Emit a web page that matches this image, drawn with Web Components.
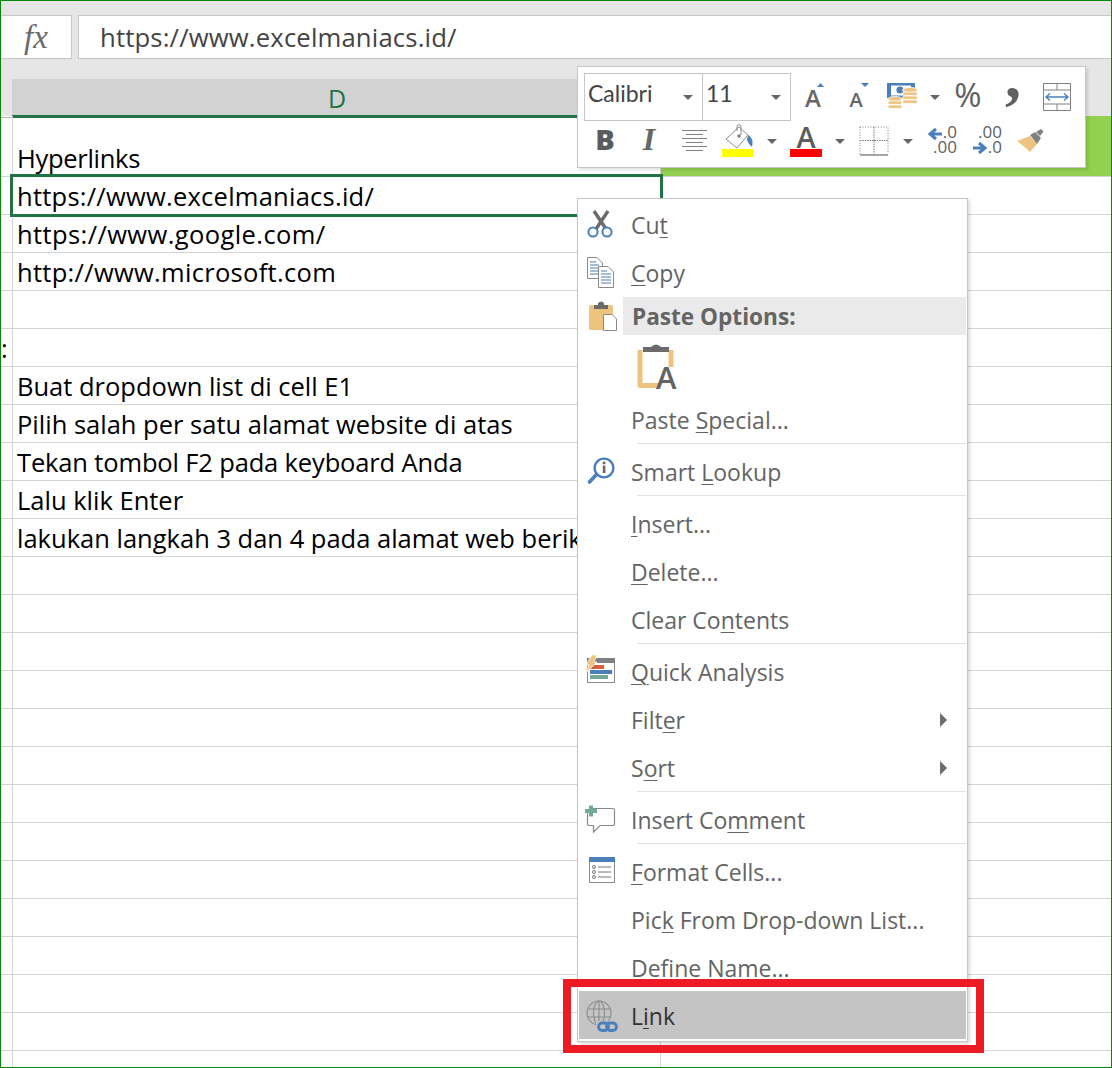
<!DOCTYPE html>
<html>
<head>
<meta charset="utf-8">
<title>Excel context menu</title>
<style>
  html, body { margin: 0; padding: 0; background: #fff; }
</style>
</head>
<body>
<xl-window>
  <xl-formula-bar>https://www.excelmaniacs.id/</xl-formula-bar>
  <xl-col-header>D</xl-col-header>
  <xl-sheet id="sheet">
    <xl-row tall fill style="letter-spacing:-.3px">Hyperlinks</xl-row>
    <xl-row selected style="letter-spacing:.25px">https://www.excelmaniacs.id/</xl-row>
    <xl-row style="letter-spacing:.4px">https://www.google.com/</xl-row>
    <xl-row style="letter-spacing:.3px">http://www.microsoft.com</xl-row>
    <xl-row></xl-row>
    <xl-row><span slot="gutter">:</span></xl-row>
    <xl-row>Buat dropdown list di cell E1</xl-row>
    <xl-row>Pilih salah per satu alamat website di atas</xl-row>
    <xl-row style="letter-spacing:-.15px">Tekan tombol F2 pada keyboard Anda</xl-row>
    <xl-row>Lalu klik Enter</xl-row>
    <xl-row>lakukan langkah 3 dan 4 pada alamat web berikut</xl-row>
  </xl-sheet>

  <xl-mini-toolbar slot="overlay"></xl-mini-toolbar>

  <xl-context-menu slot="overlay">
    <xl-menu-item icon="cut">Cu<u>t</u></xl-menu-item>
    <xl-menu-item icon="copy"><u>C</u>opy</xl-menu-item>
    <xl-menu-heading icon="paste">Paste Options:</xl-menu-heading>
    <xl-paste-row></xl-paste-row>
    <xl-menu-item>Paste <u>S</u>pecial...</xl-menu-item>
    <xl-menu-sep></xl-menu-sep>
    <xl-menu-item icon="lookup">Smart <u>L</u>ookup</xl-menu-item>
    <xl-menu-sep></xl-menu-sep>
    <xl-menu-item><u>I</u>nsert...</xl-menu-item>
    <xl-menu-item><u>D</u>elete...</xl-menu-item>
    <xl-menu-item>Clear Co<u>n</u>tents</xl-menu-item>
    <xl-menu-sep></xl-menu-sep>
    <xl-menu-item icon="quick"><u>Q</u>uick Analysis</xl-menu-item>
    <xl-menu-item arrow>Filt<u>e</u>r</xl-menu-item>
    <xl-menu-item arrow>S<u>o</u>rt</xl-menu-item>
    <xl-menu-sep></xl-menu-sep>
    <xl-menu-item icon="comment">Insert Co<u>m</u>ment</xl-menu-item>
    <xl-menu-sep></xl-menu-sep>
    <xl-menu-item icon="format"><u>F</u>ormat Cells...</xl-menu-item>
    <xl-menu-item>Pic<u>k</u> From Drop-down List...</xl-menu-item>
    <xl-menu-item>Define N<u>a</u>me...</xl-menu-item>
    <xl-menu-item icon="link" active>L<u>i</u>nk</xl-menu-item>
  </xl-context-menu>

  <xl-highlight slot="overlay"></xl-highlight>
</xl-window>

<script>
const GREY = "#6b6b6b";
const BLUE = "#4a7fbc";
const TAN = "#edc47f";
const UI_FONT = "'Open Sans', 'Noto Sans', sans-serif";

// the two stacked lines of the decimal buttons are one text
const decimals = (text) => `
  <foreignObject x="0" y="3" width="31" height="36">
    <div xmlns="http://www.w3.org/1999/xhtml" style="white-space:pre;text-align:right;font:17px/15px 'Open Sans',sans-serif;color:#606060">${text}</div>
  </foreignObject>`;

// Every icon: width, height, svg body. Toolbar icons use the row top as y=0.
const ICONS = {
  cut: [32, 32, `
    <path d="M9 1 L21 19" stroke="${GREY}" stroke-width="3.4"/>
    <path d="M23 1 L11 19" stroke="${GREY}" stroke-width="3.4"/>
    <circle cx="8" cy="22" r="4.6" fill="#fff" stroke="${BLUE}" stroke-width="2"/>
    <circle cx="22" cy="22" r="4.6" fill="#fff" stroke="${BLUE}" stroke-width="2"/>`],
  copy: [32, 32, `
    <path d="M2.5 -.5 H12 L17.5 5 V20.5 H2.5 Z" fill="#fff" stroke="#8a8a8a"/>
    <path d="M5 4 H11 M5 7 H14 M5 10 H14 M5 13 H14 M5 16 H14" stroke="${BLUE}"/>
    <path d="M13.5 8.5 H23 L28.5 14 V29.5 H13.5 Z" fill="#fff" stroke="#8a8a8a"/>
    <path d="M16 13 H22 M16 16 H26 M16 19 H26 M16 22 H26 M16 25 H26" stroke="${BLUE}"/>`],
  paste: [32, 34, `
    <rect x="4" y="6" width="24" height="25" rx="1.5" fill="${TAN}"/>
    <path d="M9 10 V6 H13 V4 Q16 1 19 4 V6 H23 V10 Z" fill="${GREY}"/>
    <path d="M18.5 15.5 H27 L31.5 20 V31.5 H18.5 Z" fill="#fff" stroke="#8a8a8a"/>`],
  pasteText: [42, 46, `
    <path d="M3 6 V41.5 H21 M34 6 V23" fill="none" stroke="${TAN}" stroke-width="5" stroke-linejoin="round"/>
    <path d="M6 8 V3 H14 Q19 -2 24 3 H32 V8 Z" fill="${GREY}"/>
    <text x="19" y="45" font-family="'Open Sans', sans-serif" font-weight="600" font-size="31" fill="#636363">A</text>`],
  lookup: [32, 32, `
    <circle cx="19" cy="11" r="9.4" fill="#fff" stroke="${BLUE}" stroke-width="2.4"/>
    <path d="M11.5 17.5 L4.5 25" stroke="${BLUE}" stroke-width="3.6" stroke-linecap="round"/>
    <rect x="17.8" y="4.6" width="2.6" height="2.6" fill="#666"/>
    <rect x="17.8" y="8.6" width="2.6" height="7.4" fill="#666"/>`],
  quick: [32, 32, `
    <rect x="2.5" y="1.5" width="27" height="24" fill="#fff" stroke="#8a8a8a"/>
    <rect x="2" y="1" width="28" height="5" fill="#808080"/>
    <rect x="5" y="8" width="14" height="4" fill="#d9603f"/>
    <rect x="5" y="13" width="22" height="4" fill="${BLUE}"/>
    <rect x="5" y="18" width="18" height="4" fill="#72a895"/>
    <path d="M7 -2 H12 L9 5 H12 L0 17 L4 8 H1 Z" fill="${TAN}" stroke="#fff" stroke-width=".8"/>`],
  comment: [32, 32, `
    <path d="M5 3.5 H28 Q29.5 3.5 29.5 5 V19 Q29.5 20.5 28 20.5 H15 L8.5 27 V20.5 H4 Q2.5 20.5 2.5 19 V7" fill="#fff" stroke="#8a8a8a" stroke-width="1.2"/>
    <path d="M0 6 H12 M6 .5 V11.5" stroke="#72a895" stroke-width="4"/>`],
  format: [32, 32, `
    <rect x="4.5" y=".5" width="25" height="25" fill="#fff" stroke="#8a8a8a"/>
    <rect x="4" y="0" width="26" height="5" fill="${BLUE}"/>
    <circle cx="9" cy="10" r="1.5" fill="none" stroke="#777"/>
    <circle cx="9" cy="15" r="1.5" fill="none" stroke="#777"/>
    <circle cx="9" cy="20" r="1.5" fill="none" stroke="#777"/>
    <path d="M13 10 H26 M13 15 H26 M13 20 H26" stroke="#777"/>`],
  link: [34, 34, `
    <g fill="none" stroke="#8c8c8c" stroke-width="1.1">
      <circle cx="14" cy="14" r="12"/>
      <ellipse cx="14" cy="14" rx="5.5" ry="12"/>
      <path d="M14 2 V26 M2.5 10 H25.5 M2.5 18 H25.5"/>
    </g>
    <rect x="11" y="22" width="23" height="11" fill="#c4c4c4"/>
    <g fill="none" stroke="${BLUE}" stroke-width="2.8">
      <rect x="13.5" y="24" width="10" height="7.5" rx="3.7"/>
      <rect x="21.5" y="24" width="10" height="7.5" rx="3.7"/>
    </g>`],
  growFont: [26, 48, `
    <text x="12" y="34" text-anchor="middle" font-family="'Open Sans', sans-serif" font-weight="600" font-size="24" fill="#666">A</text>
    <path d="M16 14 L19.5 10 L23 14 Z" fill="${BLUE}"/>`],
  shrinkFont: [26, 48, `
    <text x="12" y="34" text-anchor="middle" font-family="'Open Sans', sans-serif" font-weight="600" font-size="20" fill="#666">A</text>
    <path d="M17 10 H25 L21 14 Z" fill="${BLUE}"/>`],
  currency: [34, 48, `
    <path d="M1 10 H29 V25 H1 Z" fill="${BLUE}"/>
    <path d="M5 12.5 H25 V22.5 H5 Z" fill="#fff"/>
    <circle cx="14" cy="17" r="3.6" fill="${BLUE}"/>
    <g fill="${TAN}" stroke="#fff" stroke-width=".8">
      <ellipse cx="24" cy="17" rx="7.5" ry="2.6"/>
      <rect x="16.5" y="19" width="15" height="3.4" rx="1.6"/>
      <rect x="16.5" y="23" width="15" height="3.4" rx="1.6"/>
      <rect x="16.5" y="27" width="15" height="3.4" rx="1.6"/>
      <ellipse cx="9" cy="26" rx="7" ry="2.6"/>
      <rect x="2" y="28" width="14" height="3.4" rx="1.6"/>
      <rect x="2" y="32" width="14" height="3.4" rx="1.6"/>
    </g>`],
  percent: [34, 48, `
    <text x="17" y="34" text-anchor="middle" font-family="'Open Sans', sans-serif" font-size="33" fill="#606060">%</text>`],
  comma: [24, 48, `
    <text x="12" y="24" text-anchor="middle" font-family="'Liberation Serif', serif" font-weight="700" font-size="64" fill="#606060">,</text>`],
  wrapWidth: [30, 48, `
    <path d="M1.5 10.5 H28.5 V37.5 H1.5 Z M1.5 17 H28.5 M1.5 31 H28.5 M15 10.5 V17 M15 31 V37.5" fill="none" stroke="#808080"/>
    <path d="M4 24 H26 M8 20.5 L4 24 L8 27.5 M22 20.5 L26 24 L22 27.5" fill="none" stroke="${BLUE}" stroke-width="1.4"/>`],
  bold: [30, 40, `
    <text x="15" y="29" text-anchor="middle" font-family="'Open Sans', sans-serif" font-weight="800" font-size="29" fill="#5c5c5c">B</text>`],
  italic: [30, 40, `
    <text x="15" y="29" text-anchor="middle" font-family="'Liberation Serif', serif" font-style="italic" font-weight="700" font-size="32" fill="#666">I</text>`],
  align: [28, 40, `
    <path d="M2 9.5 H27 M6 13.5 H23 M2 17.5 H27 M6 21.5 H23 M2 25.5 H27 M6 29.5 H23" stroke="#808080"/>`],
  fill: [34, 40, `
    <path d="M18 6 L5 18 L16 27 L27 14 Z" fill="#fff" stroke="#8a8a8a"/>
    <path d="M16 10 V5 Q18 2 20 5 V14" fill="none" stroke="#8a8a8a"/>
    <circle cx="18" cy="15" r="1.8" fill="#808080"/>
    <path d="M27 14 Q33 17 31 26 Q28 24 26 19 Z" fill="${BLUE}"/>
    <rect x="1" y="28" width="32" height="8" fill="#ffff00"/>`],
  fontColor: [34, 40, `
    <text x="17" y="27" text-anchor="middle" font-family="'Open Sans', sans-serif" font-weight="600" font-size="29" fill="#5c5c5c">A</text>
    <rect x="1" y="28" width="32" height="8" fill="#ff0000"/>`],
  borders: [32, 40, `
    <path d="M2 6 H30 V33 M2 6 V33" fill="none" stroke="#808080" stroke-dasharray="1 1.6"/>
    <path d="M16 6 V33 M2 19.5 H30" fill="none" stroke="#707070" stroke-dasharray="1.4 1"/>
    <path d="M2 34 H30" stroke="#808080" stroke-width="1.4"/>`],
  decLeft: [32, 40, `
    ${decimals(".0\n.00")}
    <path d="M16 13 H5 M10 8 L4 13 L10 18" fill="none" stroke="${BLUE}" stroke-width="3"/>`],
  decRight: [32, 40, `
    ${decimals(".00\n.0")}
    <path d="M2 27 H13 M8 22 L14 27 L8 32" fill="none" stroke="${BLUE}" stroke-width="3"/>`],
  brush: [30, 40, `
    <path d="M2 20 L15 15 L22 23 L15 31 Q9 25 2 20 Z" fill="${TAN}"/>
    <path d="M15 14 L20 11 L26 17 L22 23 Z" fill="#808080"/>
    <path d="M21 11 L26 8 L28.5 10.5 L25 15 Z" fill="#808080"/>`]
};

class XlIcon extends HTMLElement {
  constructor() {
    super();
    this.attachShadow({ mode: "open" });
  }
  connectedCallback() {
    const [w, h, body] = ICONS[this.getAttribute("name")];
    this.shadowRoot.innerHTML = `
      <style>
        :host { display: block; flex: none; }
        svg { display: block; overflow: visible; }
      </style>
      <svg width="${w}" height="${h}" viewBox="0 0 ${w} ${h}">${body}</svg>
    `;
  }
}
customElements.define("xl-icon", XlIcon);

class XlWindow extends HTMLElement {
  constructor() {
    super();
    this.attachShadow({ mode: "open" }).innerHTML = `
      <style>
        :host {
          display: block;
          position: relative;
          box-sizing: border-box;
          width: 1112px;
          height: 1068px;
          border: 1px solid #0a860a;
          overflow: hidden;
          background: #fff;
          font-family: ${UI_FONT};
        }
      </style>
      <slot></slot>
      <slot name="overlay"></slot>
    `;
  }
}
customElements.define("xl-window", XlWindow);

class XlFormulaBar extends HTMLElement {
  constructor() {
    super();
    this.attachShadow({ mode: "open" }).innerHTML = `
      <style>
        :host {
          display: flex;
          box-sizing: border-box;
          height: 78px;
          padding-top: 14px;
          gap: 6px;
          background: #e6e6e6;
        }
        .fx, .input {
          box-sizing: border-box;
          height: 44px;
          background: #fff;
          border: 1px solid #c6c6c6;
          display: flex;
          align-items: center;
        }
        .fx {
          width: 71px;
          border-left: 0;
          justify-content: center;
          font: italic 33px "Liberation Serif", serif;
          color: #6a6a6a;
        }
        .input {
          flex: 1;
          border-right: 0;
          padding-left: 21px;
          font-size: 25.7px;
          letter-spacing: .14px;
          color: #444;
        }
      </style>
      <div class="fx">fx</div>
      <div class="input"><slot></slot></div>
    `;
  }
}
customElements.define("xl-formula-bar", XlFormulaBar);

class XlColHeader extends HTMLElement {
  constructor() {
    super();
    this.attachShadow({ mode: "open" }).innerHTML = `
      <style>
        :host {
          display: grid;
          grid-template-columns: 11px 648px 1fr;
          height: 37px;
          background: #e6e6e6;
        }
        .gutter, .rest { border-bottom: 1px solid #b5b5b5; }
        .d {
          box-sizing: border-box;
          background: #d2d2d2;
          border-bottom: 3px solid #217346;
          display: flex;
          align-items: center;
          justify-content: center;
          padding: 2px 0 0 2px;
          font-size: 25px;
          color: #217346;
        }
      </style>
      <div class="gutter"></div>
      <div class="d"><slot></slot></div>
      <div class="rest"></div>
    `;
  }
}
customElements.define("xl-col-header", XlColHeader);

class XlSheet extends HTMLElement {
  constructor() {
    super();
    this.attachShadow({ mode: "open" }).innerHTML = `
      <style>
        :host { display: block; font-size: 25.5px; color: #000; }
      </style>
      <slot></slot>
    `;
  }
  connectedCallback() {
    // blank rows down to the bottom of the window
    while (this.children.length < 26) {
      this.appendChild(document.createElement("xl-row"));
    }
  }
}
customElements.define("xl-sheet", XlSheet);

class XlRow extends HTMLElement {
  constructor() {
    super();
    this.attachShadow({ mode: "open" }).innerHTML = `
      <style>
        :host {
          display: grid;
          grid-template-columns: 12px 648px 1fr;
          box-sizing: border-box;
          height: 38px;
          border-bottom: 1px solid #d4d4d4;
          line-height: 35px;
        }
        :host([tall]) { height: 61px; }
        .gutter {
          border-right: 1px solid #d4d4d4;
          white-space: nowrap;
          overflow: hidden;
          align-self: stretch;
          display: flex;
          align-items: flex-end;
        }
        .d {
          position: relative;
          box-sizing: border-box;
          border-right: 1px solid #d4d4d4;
          padding-left: 4px;
          white-space: nowrap;
          display: flex;
          align-items: flex-end;
        }
        :host([fill]) .e { background: #92d050; }
        :host([selected]) .d::after {
          content: "";
          position: absolute;
          left: -3px;
          top: -3px;
          right: -3px;
          bottom: -3px;
          border: 3px solid #217346;
        }
      </style>
      <div class="gutter"><slot name="gutter"></slot></div>
      <div class="d"><span><slot></slot></span></div>
      <div class="e"></div>
    `;
  }
}
customElements.define("xl-row", XlRow);

class XlMiniToolbar extends HTMLElement {
  constructor() {
    super();
    const ic = (name, ml) => `<xl-icon name="${name}" style="margin-left:${ml}px"></xl-icon>`;
    const arrow = (ml) => `<span class="arrow" style="margin-left:${ml}px"></span>`;
    this.attachShadow({ mode: "open" }).innerHTML = `
      <style>
        :host {
          position: absolute;
          left: 576px;
          top: 65px;
          box-sizing: border-box;
          width: 509px;
          height: 102px;
          padding: 6px 0 0 6px;
          background: #fff;
          border: 1px solid #c6c6c6;
          box-shadow: 2px 2px 3px rgba(0, 0, 0, .12);
          color: #444;
        }
        .row { display: flex; align-items: center; }
        .top { height: 48px; }
        .bottom { height: 40px; }
        .combo {
          box-sizing: border-box;
          height: 48px;
          border: 1px solid #c6c6c6;
          display: flex;
          align-items: center;
          padding: 0 9px 0 3px;
          font: 23px Lato, sans-serif;
          color: #444;
        }
        .combo span { flex: 1; position: relative; top: -4px; }
        .combo.font { width: 119px; }
        .combo.size { width: 89px; margin-left: -1px; }
        .arrow {
          flex: none;
          width: 0;
          height: 0;
          border-left: 5px solid transparent;
          border-right: 5px solid transparent;
          border-top: 5px solid #666;
        }
      </style>
      <div class="row top">
        <div class="combo font"><span>Calibri</span><i class="arrow"></i></div>
        <div class="combo size"><span>11</span><i class="arrow"></i></div>
        ${ic("growFont", 10)}${ic("shrinkFont", 17)}${ic("currency", 16)}${arrow(10)}
        ${ic("percent", 11)}${ic("comma", 16)}${ic("wrapWidth", 17)}
      </div>
      <div class="row bottom">
        ${ic("bold", 6)}${ic("italic", 14)}${ic("align", 16)}${ic("fill", 13)}${arrow(12)}
        ${ic("fontColor", 12)}${arrow(12)}${ic("borders", 13)}${arrow(13)}
        ${ic("decLeft", 13)}${ic("decRight", 13)}${ic("brush", 12)}
      </div>
    `;
  }
}
customElements.define("xl-mini-toolbar", XlMiniToolbar);

class XlContextMenu extends HTMLElement {
  constructor() {
    super();
    this.attachShadow({ mode: "open" }).innerHTML = `
      <style>
        :host {
          position: absolute;
          left: 576px;
          top: 197px;
          box-sizing: border-box;
          width: 391px;
          padding: 3px 1px 2px;
          background: #fff;
          border: 1px solid #c6c6c6;
          box-shadow: 2px 2px 3px rgba(0, 0, 0, .15);
          font-size: 23px;
          color: #646464;
        }
      </style>
      <slot></slot>
    `;
  }
}
customElements.define("xl-context-menu", XlContextMenu);

class XlMenuItem extends HTMLElement {
  constructor() {
    super();
    this.attachShadow({ mode: "open" });
  }
  connectedCallback() {
    const icon = this.getAttribute("icon");
    this.shadowRoot.innerHTML = `
      <style>
        :host {
          display: flex;
          align-items: center;
          box-sizing: border-box;
          height: 48px;
          white-space: nowrap;
        }
        :host([active]) {
          margin-top: -2px;
          padding-top: 4px;
          background: #c4c4c4;
          color: #333;
        }
        .icon {
          flex: none;
          width: 52px;
          height: 32px;
          padding-left: 6px;
          box-sizing: border-box;
        }
        :host([active]) .icon { position: relative; top: -2px; }
        .label { flex: 1; padding-bottom: 2px; }
        ::slotted(u) { text-underline-offset: 3px; text-decoration-thickness: 1px; }
        .arrow {
          width: 0;
          height: 0;
          margin-right: 19px;
          border-top: 7px solid transparent;
          border-bottom: 7px solid transparent;
          border-left: 7px solid #6b6b6b;
          position: relative;
          top: -1px;
        }
      </style>
      <div class="icon">${icon ? `<xl-icon name="${icon}"></xl-icon>` : ""}</div>
      <div class="label"><slot></slot></div>
      ${this.hasAttribute("arrow") ? `<div class="arrow"></div>` : ""}
    `;
  }
}
customElements.define("xl-menu-item", XlMenuItem);

class XlMenuHeading extends HTMLElement {
  constructor() {
    super();
    this.attachShadow({ mode: "open" });
  }
  connectedCallback() {
    this.shadowRoot.innerHTML = `
      <style>
        :host {
          display: flex;
          align-items: center;
          box-sizing: border-box;
          height: 38px;
          margin-top: -1px;
        }
        .icon { flex: none; width: 44px; padding-left: 6px; box-sizing: border-box; }
        .title {
          flex: 1;
          align-self: stretch;
          display: flex;
          align-items: center;
          padding-left: 9px;
          background: #eaeaea;
          font-weight: 700;
          font-size: 22.6px;
        }
      </style>
      <div class="icon"><xl-icon name="${this.getAttribute("icon")}"></xl-icon></div>
      <div class="title"><slot></slot></div>
    `;
  }
}
customElements.define("xl-menu-heading", XlMenuHeading);

class XlPasteRow extends HTMLElement {
  constructor() {
    super();
    this.attachShadow({ mode: "open" }).innerHTML = `
      <style>
        :host {
          display: block;
          box-sizing: border-box;
          height: 62px;
          padding: 9px 0 0 58px;
        }
      </style>
      <xl-icon name="pasteText"></xl-icon>
    `;
  }
}
customElements.define("xl-paste-row", XlPasteRow);

class XlMenuSep extends HTMLElement {
  constructor() {
    super();
    this.attachShadow({ mode: "open" }).innerHTML = `
      <style>
        :host {
          display: block;
          box-sizing: border-box;
          height: 4px;
          margin: -2px 0 2px 58px;
          border-top: 1px solid #e2e2e2;
        }
      </style>
    `;
  }
}
customElements.define("xl-menu-sep", XlMenuSep);

class XlHighlight extends HTMLElement {
  constructor() {
    super();
    this.attachShadow({ mode: "open" }).innerHTML = `
      <style>
        :host {
          position: absolute;
          left: 562px;
          top: 978px;
          box-sizing: border-box;
          width: 421px;
          height: 74px;
          border: 8px solid #ed1c24;
          pointer-events: none;
        }
      </style>
    `;
  }
}
customElements.define("xl-highlight", XlHighlight);
</script>
</body>
</html>
